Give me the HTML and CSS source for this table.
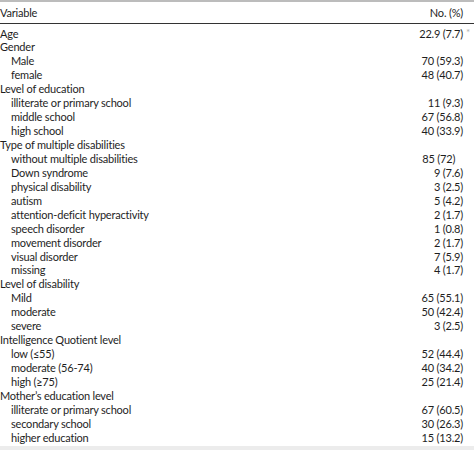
FILE: index.html
```html
<!DOCTYPE html>
<html>
<head>
<meta charset="utf-8">
<link rel="stylesheet" href="styles.css">
</head>
<body>
<div class="page">
  <div class="topband"></div>
  <div class="head">
    <span class="label">Variable</span>
    <span class="val">No. (%)</span>
  </div>
  <div class="rows">
    <div class="row"><span class="label">Age</span><span class="val">22.9 (7.7)<span class="mark">*</span></span></div>
    <div class="row"><span class="label">Gender</span></div>
    <div class="row sub"><span class="label">Male</span><span class="val">70 (59.3)</span></div>
    <div class="row sub"><span class="label">female</span><span class="val">48 (40.7)</span></div>
    <div class="row"><span class="label">Level of education</span></div>
    <div class="row sub"><span class="label">illiterate or primary school</span><span class="val">11 (9.3)</span></div>
    <div class="row sub"><span class="label">middle school</span><span class="val">67 (56.8)</span></div>
    <div class="row sub"><span class="label">high school</span><span class="val">40 (33.9)</span></div>
    <div class="row"><span class="label">Type of multiple disabilities</span></div>
    <div class="row sub"><span class="label">without multiple disabilities</span><span class="val">85 (72)&nbsp;&nbsp;&nbsp;</span></div>
    <div class="row sub"><span class="label">Down syndrome</span><span class="val">9 (7.6)</span></div>
    <div class="row sub"><span class="label">physical disability</span><span class="val">3 (2.5)</span></div>
    <div class="row sub"><span class="label">autism</span><span class="val">5 (4.2)</span></div>
    <div class="row sub"><span class="label">attention-deficit hyperactivity</span><span class="val">2 (1.7)</span></div>
    <div class="row sub"><span class="label">speech disorder</span><span class="val">1 (0.8)</span></div>
    <div class="row sub"><span class="label">movement disorder</span><span class="val">2 (1.7)</span></div>
    <div class="row sub"><span class="label">visual disorder</span><span class="val">7 (5.9)</span></div>
    <div class="row sub"><span class="label">missing</span><span class="val">4 (1.7)</span></div>
    <div class="row"><span class="label">Level of disability</span></div>
    <div class="row sub"><span class="label">Mild</span><span class="val">65 (55.1)</span></div>
    <div class="row sub"><span class="label">moderate</span><span class="val">50 (42.4)</span></div>
    <div class="row sub"><span class="label">severe</span><span class="val">3 (2.5)</span></div>
    <div class="row"><span class="label">Intelligence Quotient level</span></div>
    <div class="row sub"><span class="label">low (≤55)</span><span class="val">52 (44.4)</span></div>
    <div class="row sub"><span class="label">moderate (56-74)</span><span class="val">40 (34.2)</span></div>
    <div class="row sub"><span class="label">high (≥75)</span><span class="val">25 (21.4)</span></div>
    <div class="row"><span class="label">Mother’s education level</span></div>
    <div class="row sub"><span class="label">illiterate or primary school</span><span class="val">67 (60.5)</span></div>
    <div class="row sub"><span class="label">secondary school</span><span class="val">30 (26.3)</span></div>
    <div class="row sub"><span class="label">higher education</span><span class="val">15 (13.2)</span></div>
  </div>
  <div class="bottomband"></div>
</div>
</body>
</html>
```
FILE: styles.css
```css
html, body {
  margin: 0;
  padding: 0;
  background: #ffffff;
}
.page {
  width: 474px;
  height: 450px;
  font-family: Lato, "Open Sans", sans-serif;
  font-size: 11px;
  letter-spacing: -0.2px;
  color: #1e1e1e;
  display: flex;
  flex-direction: column;
}
.topband {
  height: 2px;
  background: #bcbcbc;
}
.head {
  height: 21px;
  display: flex;
  align-items: center;
  justify-content: space-between;
  border-bottom: 1px solid #333333;
  padding-right: 11px;
}
.rows {
  padding-top: 2.5px;
  flex: 1;
}
.row {
  height: 13.95px;
  line-height: 13.95px;
  display: flex;
  justify-content: space-between;
  padding-right: 11px;
  white-space: nowrap;
}
.sub .label {
  padding-left: 11px;
}
.val {
  position: relative;
}
.mark {
  position: absolute;
  left: 100%;
  top: -1px;
  margin-left: 3px;
  font-size: 10px;
  color: #b0b0b0;
}
.bottomband {
  height: 4px;
  background: #ececec;
}
```
